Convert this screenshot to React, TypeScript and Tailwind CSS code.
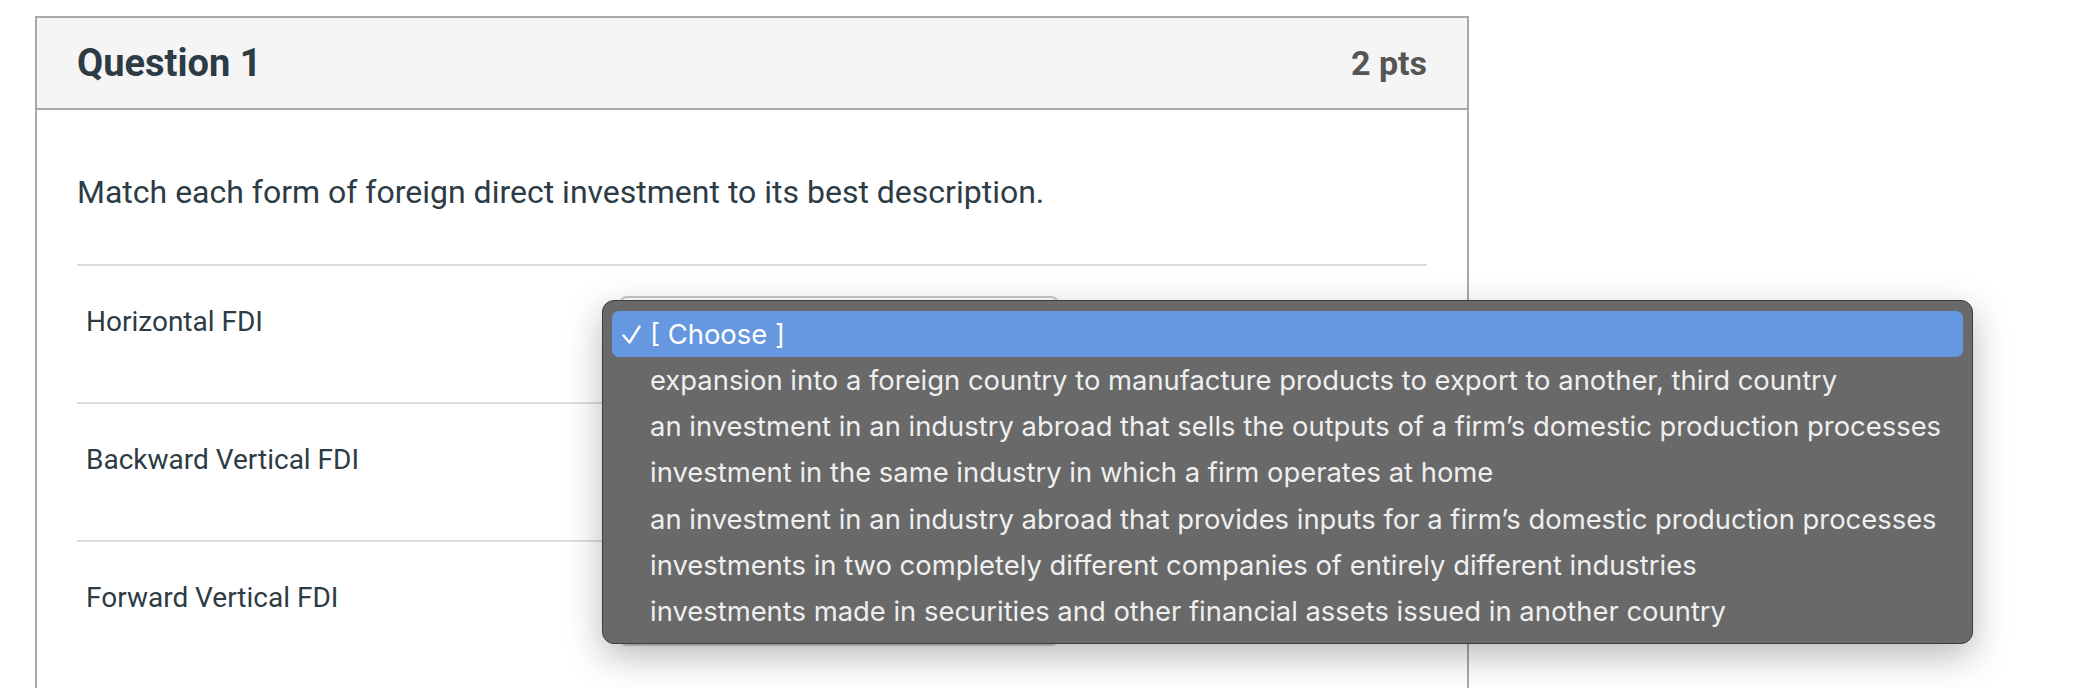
import React from "react";

const rows = ["Horizontal FDI", "Backward Vertical FDI", "Forward Vertical FDI"];

const options = [
  "[ Choose ]",
  "expansion into a foreign country to manufacture products to export to another, third country",
  "an investment in an industry abroad that sells the outputs of a firm\u2019s domestic production processes",
  "investment in the same industry in which a firm operates at home",
  "an investment in an industry abroad that provides inputs for a firm\u2019s domestic production processes",
  "investments in two completely different companies of entirely different industries",
  "investments made in securities and other financial assets issued in another country",
];

const Check = () => (
  <svg width="19" height="19" viewBox="0 0 19 19" fill="none">
    <path d="M1.5 10.5 L7.5 17.5 L17.5 1.5" stroke="white" strokeWidth="2.4" strokeLinecap="round" strokeLinejoin="round" />
  </svg>
);

const OptionMenu = () => (
  <div className="absolute left-[-17px] top-[4px] z-10 w-[1371px] rounded-[12px] border border-[#3e3e3e] bg-[#696969] px-[9px] pt-[10px] pb-[8px] shadow-[0_12px_36px_rgba(0,0,0,0.28)] font-['Inter',sans-serif] text-[27.4px]">
    {options.map((opt, i) => (
      <div
        key={opt}
        className={
          i === 0
            ? "flex h-[46.3px] items-center rounded-[7px] bg-[#6698e2] pl-[10px] text-white"
            : "flex h-[46.3px] items-center pl-[10px] text-[#efefef]"
        }
      >
        <span className="flex w-[28px] items-center">{i === 0 && <Check />}</span>
        <span className="whitespace-nowrap">{opt}</span>
      </div>
    ))}
  </div>
);

export default function App() {
  return (
    <div className="h-[688px] w-[2084px] overflow-hidden bg-white font-['Roboto',sans-serif] text-[#2d3b45]">
      <div className="ml-[35px] mt-[16px] w-[1434px] border-2 border-[#a9a9a9]">
        {/* Header */}
        <div className="flex h-[92px] items-center justify-between border-b-2 border-[#a9a9a9] bg-[#f5f5f5] px-[40px]">
          <h2 className="text-[38px] font-bold">Question 1</h2>
          <span className="text-[34px] font-bold text-[#555555]">2 pts</span>
        </div>

        {/* Body */}
        <div className="px-[40px] pt-[58px] pb-[40px]">
          <p className="mb-[48px] text-[32px] leading-[48px]">
            Match each form of foreign direct investment to its best description.
          </p>

          {rows.map((label, i) => (
            <div key={label} className="flex items-start border-t-2 border-[#dcdcdc] pt-[30px] pb-[32px]">
              <div className="mt-[5px] w-[542px] pl-[9px] text-[28px] leading-[42px]">{label}</div>
              <div className="relative">
                <div className="h-[74px] w-[440px] rounded-[8px] border-2 border-[#c8c8c8] bg-gradient-to-b from-white to-[#f1f1f1]" />
                {i === 0 && <OptionMenu />}
              </div>
            </div>
          ))}
        </div>
      </div>
    </div>
  );
}
